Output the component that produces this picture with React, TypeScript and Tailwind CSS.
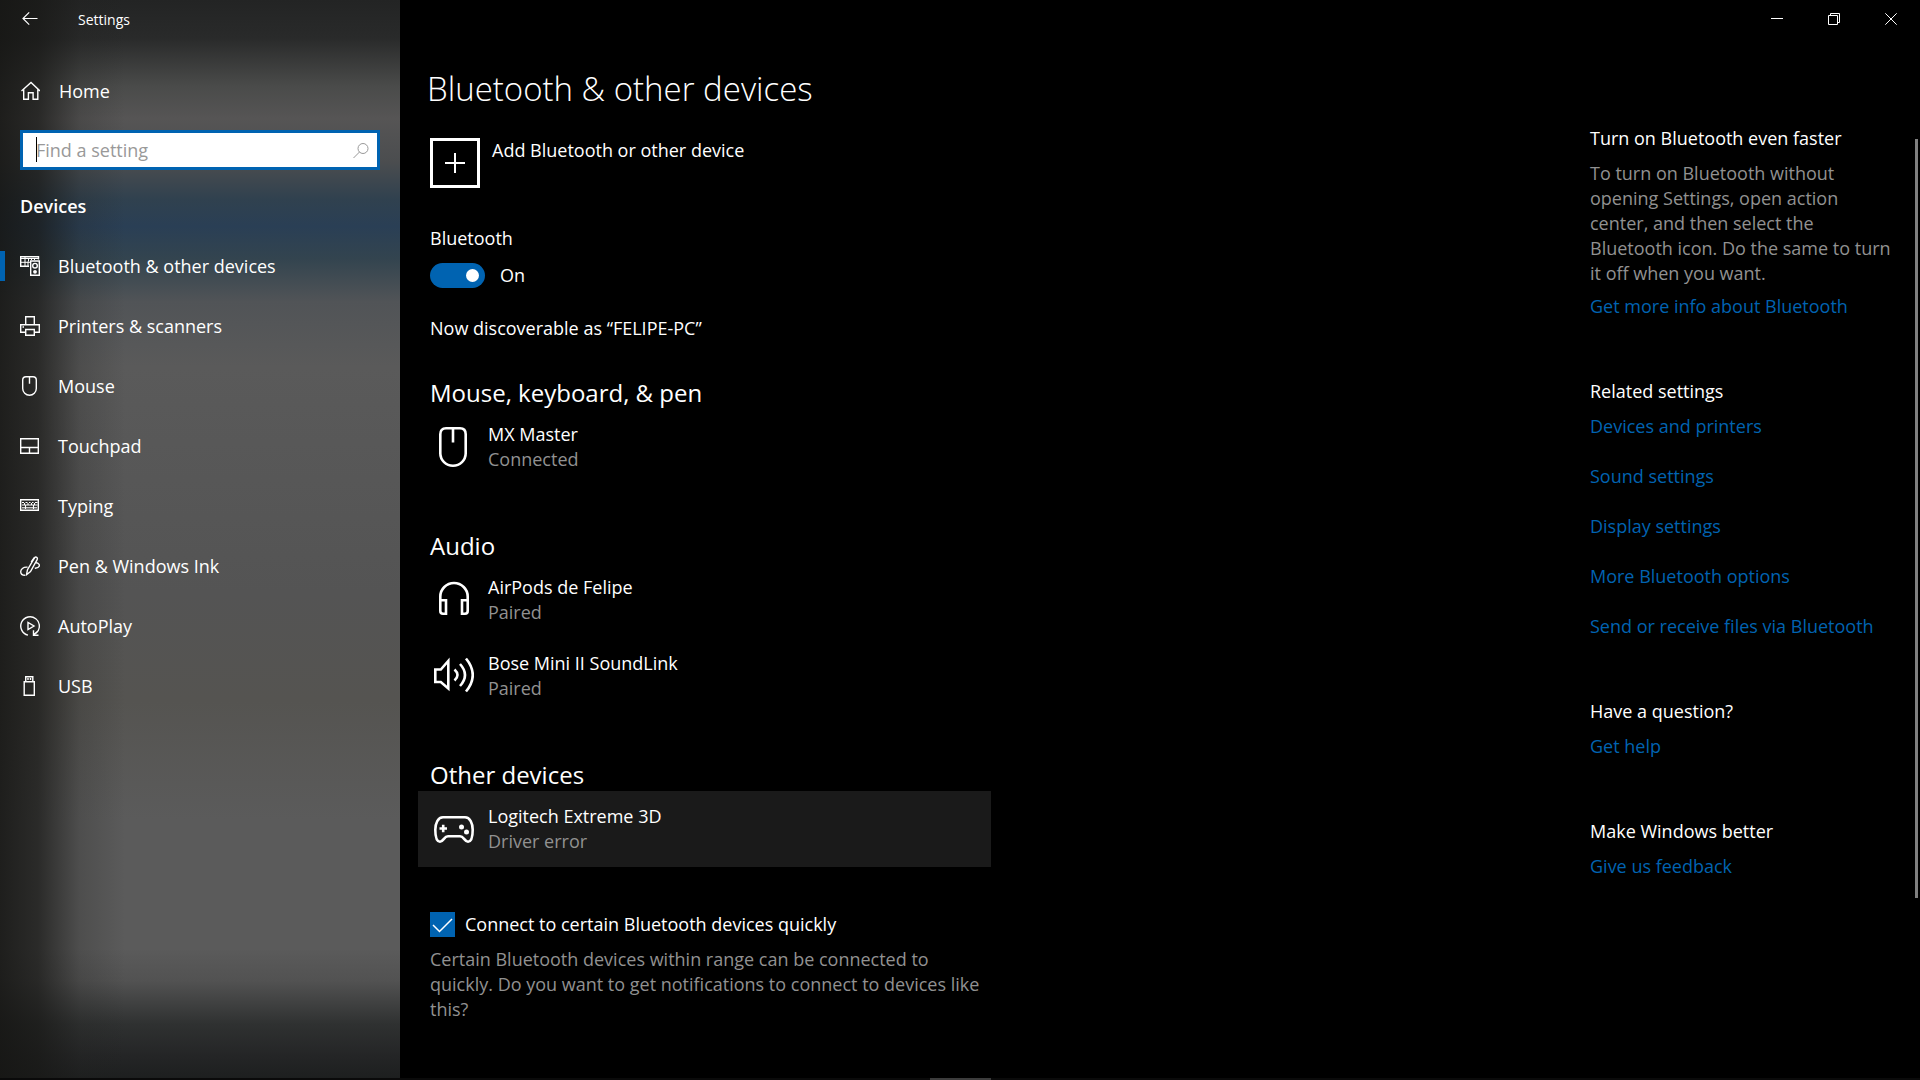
import type { ReactNode } from 'react';

interface NavItem {
    label: string;
    icon: ReactNode;
    active?: boolean;
}

interface Device {
    name: string;
    status: string;
    icon: ReactNode;
    selected?: boolean;
}

interface IconProps {
    children: ReactNode;
}

function SmallIcon({ children }: IconProps) {
    return (
        <svg
            className="h-5 w-5 shrink-0"
            viewBox="0 0 20 20"
            fill="none"
            stroke="currentColor"
            strokeWidth="1.4"
            aria-hidden="true"
        >
            {children}
        </svg>
    );
}

function LargeIcon({ children }: IconProps) {
    return (
        <svg
            className="h-10 w-10 shrink-0"
            viewBox="0 0 40 40"
            fill="none"
            stroke="currentColor"
            strokeWidth="2.6"
            aria-hidden="true"
        >
            {children}
        </svg>
    );
}

const navItems: NavItem[] = [
    {
        label: 'Bluetooth & other devices',
        active: true,
        icon: (
            <SmallIcon>
                <path d="M9 10.300H.7V.7h17.800V3.500" />
                <path d="M1 2.500h17M5 1v9M8 5.500v4.500M1 6.300h9" strokeWidth="1" />
                <path d="M8.500 2.500v3M11.500 2.500V4M14.500 2.500V4" strokeWidth="1" />
                <path d="M10.700 5h8.600v14.300h-8.600z" />
                <circle cx="15" cy="9.700" r="2.300" />
                <circle cx="15" cy="15.800" r="1.900" fill="currentColor" stroke="none" />
            </SmallIcon>
        ),
    },
    {
        label: 'Printers & scanners',
        icon: (
            <SmallIcon>
                <path d="M5.700 8.400V.7h8.600v7.700M5 16.300H.7V8.700h18.600v7.600H15" />
                <path d="M5.700 13.500h8.600v5.800H5.700z" />
                <path d="M2.500 11h1.500" />
            </SmallIcon>
        ),
    },
    {
        label: 'Mouse',
        icon: (
            <SmallIcon>
                <path d="M6 .7h7q3.300 0 3.300 3.300v8.500a6.800 6.800 0 0 1-13.600 0V4Q2.700.7 6 .7zM9.500.7v7" />
            </SmallIcon>
        ),
    },
    {
        label: 'Touchpad',
        icon: (
            <SmallIcon>
                <path d="M.7 2.700h17.600v14.600H.7zM.7 11.500h17.600M9.500 11.500v6" />
            </SmallIcon>
        ),
    },
    {
        label: 'Typing',
        icon: (
            <SmallIcon>
                <path d="M.7 3.700h17.600v10.600H.7z" />
                <path d="M2 6.500h2M5.500 6.500h2M9 6.500h1.500M12 6.500h1.500M15 6.500h2.500M2 9h15.500" strokeWidth="1.100" />
                <path d="M4.500 7v2M8 7v2M11.500 7v2M14.500 7v2M5.500 9v4M13.500 9v4" strokeWidth="1.100" />
                <path d="M2 11.800h15" strokeWidth="1.100" />
            </SmallIcon>
        ),
    },
    {
        label: 'Pen & Windows Ink',
        icon: (
            <SmallIcon>
                <path d="M6.500 18.700l1-5 6.800-11.500q1.200-1.700 2.400-.900t.300 2.600L10.500 15.500z" />
                <path d="M11.200 6L14.500 1.500" />
                <path d="M7.500 11.200C3 10.800.7 13.500.7 15.700s2 3.500 4.400 3.500M16 6.800c2.800.2 3.800 2 3.200 3.500s-2.600 1.700-4.400 2" />
            </SmallIcon>
        ),
    },
    {
        label: 'AutoPlay',
        icon: (
            <SmallIcon>
                <path d="M8 19.100A9.300 9.300 0 1 1 16 17.200" />
                <path d="M18.500 19.300h-5v-5M13.700 19l3.300-3.300" />
                <path d="M8 6.500v7l6-3.500z" />
            </SmallIcon>
        ),
    },
    {
        label: 'USB',
        icon: (
            <SmallIcon>
                <path d="M4.200 5.700h10.100v13.600H4.200zM5.700 5.700v-5h7.100v5" />
                <path d="M8 2v2M10.500 2v2" />
            </SmallIcon>
        ),
    },
];

const pointingDevices: Device[] = [
    {
        name: 'MX Master',
        status: 'Connected',
        icon: (
            <LargeIcon>
                <path d="M12 1.300h14q5.700 0 5.700 6v19a12.700 12.400 0 0 1-25.400 0v-19q0-6 5.700-6zM19 1v14.500" />
            </LargeIcon>
        ),
    },
];

const audioDevices: Device[] = [
    {
        name: 'AirPods de Felipe',
        status: 'Paired',
        icon: (
            <LargeIcon>
                <path d="M6.300 21v-4.500a13.700 13.500 0 0 1 27.400 0V21" />
                <path d="M6.300 20.300H12v13.400H9q-2.700 0-2.700-2.700zM33.700 20.300H28v13.400h3q2.700 0 2.700-2.700z" />
            </LargeIcon>
        ),
    },
    {
        name: 'Bose Mini II SoundLink',
        status: 'Paired',
        icon: (
            <LargeIcon>
                <path d="M1.300 13.500h5.500l7.500-8.500v27.500l-7.500-6.500H1.300z" />
                <path d="M20.500 13.500q6 5.500 0 11M26 8q10 11 0 22M32 2.500q13.500 16.500 0 33" />
            </LargeIcon>
        ),
    },
];

const otherDevices: Device[] = [
    {
        name: 'Logitech Extreme 3D',
        status: 'Driver error',
        selected: true,
        icon: (
            <LargeIcon>
                <path d="M9 8.300h22c5 0 7.700 6 7.700 12.400 0 6-1.300 11.800-4.700 12-3.500 0-4-5.500-8-5.500H14c-4 0-4.500 5.500-8 5.500-3.400-.2-4.700-6-4.700-12C1.300 14.300 4 8.300 9 8.300z" />
                <path d="M5.500 19.500h7.500M9.200 15.700v7.600" />
                <circle cx="27.500" cy="18" r="2.500" fill="currentColor" stroke="none" />
                <circle cx="32.500" cy="23" r="2.500" fill="currentColor" stroke="none" />
            </LargeIcon>
        ),
    },
];

const relatedLinks = [
    'Devices and printers',
    'Sound settings',
    'Display settings',
    'More Bluetooth options',
    'Send or receive files via Bluetooth',
];

function Sidebar() {
    return (
        <aside className="flex w-[400px] shrink-0 flex-col bg-[linear-gradient(to_right,rgba(22,22,20,0.88)_0px,rgba(24,24,22,0.72)_38px,rgba(32,32,30,0.22)_80px,transparent_125px),linear-gradient(to_bottom,#232424_0%,#292a2a_3.500%,#4a4b4a_8%,#565555_11%,#4b4d4f_15%,#30414f_18.500%,#2a3f55_21%,#33444f_24%,#515457_28%,#5a5a5a_34%,#545454_55%,#555451_65%,#5b5b5b_76%,#5b5b5b_88%,#525252_91%,#2f3131_95%,#242526_98%,#1d1f1f_100%)]">
            <div className="flex h-[38px] items-center">
                <button type="button" aria-label="Back" className="flex h-full w-[60px] items-center justify-center">
                    <svg className="h-5 w-5" viewBox="0 0 20 20" fill="none" stroke="currentColor" strokeWidth="1.2">
                        <path d="M17.500 9.500H3M9.200 3.300L3 9.500l6.200 6.200" />
                    </svg>
                </button>
                <span className="pt-px pl-[18px] text-sm">Settings</span>
            </div>

            <a href="#home" className="mt-7 flex h-[50px] items-center gap-[19px] px-5">
                <SmallIcon>
                    <path d="M1.500 10L11 1.500l9 8.500M3.700 8.500v9.800h4.700v-6.500h4.700v6.500h4.700V8.500" />
                </SmallIcon>
                Home
            </a>

            {/* Search */}
            <div className="relative mx-5 mt-3.5">
                <input
                    type="text"
                    aria-label="Find a setting"
                    placeholder="Find a setting"
                    className="block h-10 w-full border-[3px] border-[#0063b1] bg-white pr-10 pl-[13px] text-black outline-none placeholder:text-[#999]"
                />
                <span className="absolute top-[7px] left-4 h-[25px] w-px bg-black" />
                <svg
                    className="absolute top-3 right-2.5 h-[18px] w-[18px] text-[#999]"
                    viewBox="0 0 18 18"
                    fill="none"
                    stroke="currentColor"
                    aria-hidden="true"
                >
                    <circle cx="11" cy="6.500" r="5" />
                    <path d="M7.500 10L1.500 16" />
                </svg>
            </div>

            <h2 className="mt-6 px-5 font-semibold">Devices</h2>

            <nav className="mt-[17px] flex flex-col">
                {navItems.map((item) => (
                    <a key={item.label} href="#" className="flex h-[60px] items-center">
                        <span className={item.active ? 'h-[30px] w-[5px] bg-[#0063b1]' : 'h-[30px] w-[5px]'} />
                        <span className="flex items-center gap-[18px] pl-[15px]">
                            {item.icon}
                            {item.label}
                        </span>
                    </a>
                ))}
            </nav>
        </aside>
    );
}

function WindowControls() {
    return (
        <div className="flex h-[38px] justify-end pr-px">
            <button type="button" aria-label="Minimize" className="flex w-[57px] items-center justify-center">
                <svg className="h-3 w-3" viewBox="0 0 12 12" fill="none" stroke="currentColor">
                    <path d="M0 5.500h12" />
                </svg>
            </button>
            <button type="button" aria-label="Restore" className="flex w-[57px] items-center justify-center">
                <svg className="h-3 w-3" viewBox="0 0 12 12" fill="none" stroke="currentColor">
                    <path d="M.5 2.500h9v9h-9zM2.500 2.500v-2h9v9h-2" />
                </svg>
            </button>
            <button type="button" aria-label="Close" className="flex w-[57px] items-center justify-center">
                <svg className="h-3 w-3" viewBox="0 0 12 12" fill="none" stroke="currentColor">
                    <path d="M.3.3l11.400 11.400M11.700.3L.3 11.700" />
                </svg>
            </button>
        </div>
    );
}

function DeviceSection({ title, devices }: { title: string; devices: Device[] }) {
    return (
        <section>
            <h2 className="text-2xl leading-8">{title}</h2>
            {devices.map((device) => (
                <button
                    key={device.name}
                    type="button"
                    className={
                        device.selected
                            ? '-mx-3 flex h-[76px] w-[573px] items-center gap-[14px] bg-[#1a1a1a] px-4 text-left'
                            : '-mx-3 flex h-[76px] w-[573px] items-center gap-[14px] px-4 text-left'
                    }
                >
                    {device.icon}
                    <span className="flex flex-col">
                        <span>{device.name}</span>
                        <span className="text-[#919191]">{device.status}</span>
                    </span>
                </button>
            ))}
        </section>
    );
}

function SideLink({ children }: { children: ReactNode }) {
    return (
        <a href="#" className="block text-[#0063b1]">
            {children}
        </a>
    );
}

function HelpColumn() {
    return (
        <aside className="flex w-[330px] shrink-0 flex-col gap-[60px] pt-[14px] pr-5">
            <section>
                <h3>Turn on Bluetooth even faster</h3>
                <p className="mt-2.5 mb-2 text-[#919191]">
                    To turn on Bluetooth without opening Settings, open action center, and then select the Bluetooth
                    icon. Do the same to turn it off when you want.
                </p>
                <SideLink>Get more info about Bluetooth</SideLink>
            </section>
            <section>
                <h3>Related settings</h3>
                <div className="mt-2.5 flex flex-col gap-[25px]">
                    {relatedLinks.map((link) => (
                        <SideLink key={link}>{link}</SideLink>
                    ))}
                </div>
            </section>
            <section className="flex flex-col gap-2.5">
                <h3>Have a question?</h3>
                <SideLink>Get help</SideLink>
            </section>
            <section className="flex flex-col gap-2.5">
                <h3>Make Windows better</h3>
                <SideLink>Give us feedback</SideLink>
            </section>
        </aside>
    );
}

export default function App() {
    return (
        <div className="relative flex min-h-screen flex-col bg-black font-['Open_Sans',sans-serif] text-lg leading-[25px] text-white">
            <div className="flex flex-1">
                <Sidebar />
                <main className="flex min-w-0 flex-1 flex-col">
                    <WindowControls />
                    <h1 className="mt-7 pl-[27px] text-[33px] leading-[46px] font-light">
                        Bluetooth &amp; other devices
                    </h1>

                    <div className="flex flex-1 justify-between pl-[30px]">
                        <div className="w-[561px] shrink-0 pt-[26px]">
                            {/* Add device */}
                            <button type="button" className="flex items-start gap-3 text-left">
                                <span className="flex h-[50px] w-[50px] items-center justify-center border-[3px] border-white">
                                    <svg className="h-5 w-5" viewBox="0 0 20 20" stroke="currentColor" strokeWidth="2">
                                        <path d="M0 10h20M10 0v20" />
                                    </svg>
                                </span>
                                Add Bluetooth or other device
                            </button>

                            {/* Bluetooth switch */}
                            <div className="mt-[38px]">
                                <label htmlFor="bluetooth">Bluetooth</label>
                                <div className="mt-3 flex items-center gap-[15px]">
                                    <span className="relative flex h-[25px] w-[55px]">
                                        <input
                                            id="bluetooth"
                                            type="checkbox"
                                            role="switch"
                                            defaultChecked
                                            className="h-full w-full appearance-none rounded-full bg-[#0063b1]"
                                        />
                                        <span className="pointer-events-none absolute top-1.5 right-1.5 h-[13px] w-[13px] rounded-full bg-white" />
                                    </span>
                                    On
                                </div>
                            </div>
                            <p className="mt-7">Now discoverable as “FELIPE-PC”</p>

                            {/* Devices */}
                            <div className="mt-9 flex flex-col gap-[45px]">
                                <DeviceSection title="Mouse, keyboard, & pen" devices={pointingDevices} />
                                <DeviceSection title="Audio" devices={audioDevices} />
                                <DeviceSection title="Other devices" devices={otherDevices} />
                            </div>

                            {/* Quick connect */}
                            <div className="mt-[45px] flex items-center gap-2.5">
                                <span className="relative flex h-[25px] w-[25px]">
                                    <input
                                        id="quick"
                                        type="checkbox"
                                        defaultChecked
                                        className="h-full w-full appearance-none bg-[#0063b1]"
                                    />
                                    <svg
                                        className="pointer-events-none absolute inset-0 h-[25px] w-[25px]"
                                        viewBox="0 0 25 25"
                                        fill="none"
                                        stroke="currentColor"
                                        strokeWidth="1.500"
                                    >
                                        <path d="M3 13l6.500 6.500L22 7" />
                                    </svg>
                                </span>
                                <label htmlFor="quick">Connect to certain Bluetooth devices quickly</label>
                            </div>
                            <p className="mt-2.5 text-[#919191]">
                                Certain Bluetooth devices within range can be connected to quickly. Do you want to get
                                notifications to connect to devices like this?
                            </p>
                        </div>
                        <HelpColumn />
                    </div>
                </main>
            </div>

            {/* Bottom edge */}
            <div className="flex h-0.5 justify-center bg-[#0a0a0a]">
                <span className="w-[61px] bg-[#3c3c3c]" />
            </div>

            {/* Scroll thumb */}
            <div className="absolute top-[139px] right-0.5 h-[759px] w-[3px] bg-[#808080]" />
        </div>
    );
}
